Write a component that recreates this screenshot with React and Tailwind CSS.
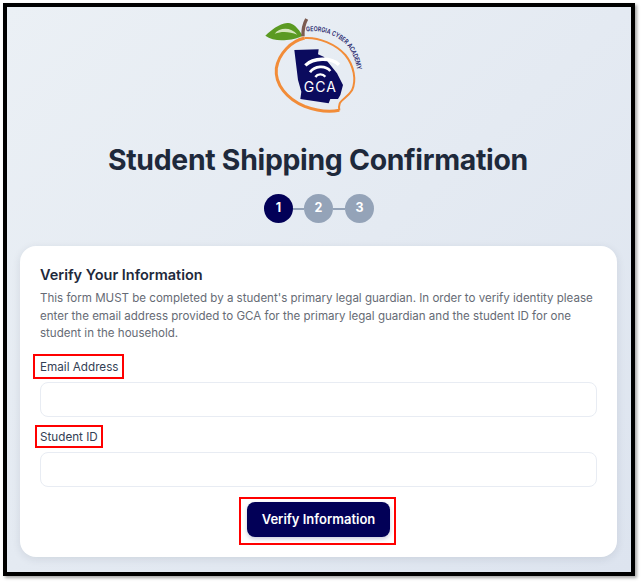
import React from 'react';

// coordinates follow the reference crop at 3x, so the viewBox is 3 times the drawn size
const Logo = () => (
  <svg width="110" height="100" viewBox="0 0 330 300" className="block -ml-[4px]">
    <path d="M122 62 C108 38 92 22 76 24 C50 26 28 46 10 62 C26 74 50 78 74 75 C94 73 110 68 122 62 Z" fill="#5b9a22" />
    <path d="M38 56 C52 38 86 34 106 59 C84 50 60 48 38 56 Z" fill="#d5e6bd" />
    <path d="M123 64 C122 44 125 28 134 12" stroke="#7b5b50" strokeWidth="10" fill="none" />
    <path d="M128 69 C88 78 50 115 43 160 C38 208 75 252 128 274 C165 288 205 291 232 286" stroke="#f28c38" strokeWidth="9" fill="none" />
    <path d="M128 69 C170 66 222 88 250 120 C276 152 284 196 270 226 C258 246 238 254 233 266 C230 274 231 280 232 286" stroke="#f28c38" strokeWidth="6" fill="none" />
    <path d="M97 105 L170 103 L168 118 L185 125 L205 150 L225 175 L243 210 L235 240 L228 252 L205 252 L200 265 L115 252 L118 230 L108 195 Z" fill="#0b0b5e" />
    <path d="M130 151 C154 128 206 126 231 149" stroke="#ffffff" strokeWidth="10" fill="none" />
    <path d="M144 172 C158 152 190 150 205 168" stroke="#ffffff" strokeWidth="8" fill="none" />
    <path d="M160 186 C167 176 182 175 190 185" stroke="#ffffff" strokeWidth="7" fill="none" />
    <text x="175" y="230" textAnchor="middle" fill="#ffffff" fontSize="42" letterSpacing="3" fontFamily="Inter, sans-serif">GCA</text>
    <path id="logo-arc" d="M133 50 C185 42 235 65 262 100 C280 130 290 170 291 212" fill="none" />
    <text fill="#1f1f6b" fontSize="20" fontWeight="600" fontFamily="Inter, sans-serif" textLength="214" lengthAdjust="spacingAndGlyphs">
      <textPath href="#logo-arc">GEORGIA CYBER ACADEMY</textPath>
    </text>
  </svg>
);

const Step = ({ n, active }) => (
  <div className={`w-[29px] h-[29px] rounded-full flex items-center justify-center text-white text-[12.5px] font-bold ${active ? 'bg-[#020057]' : 'bg-[#94a3b8]'}`}>
    {n}
  </div>
);

export default function App() {
  return (
    <div className="w-[644px] h-[585px] bg-white pl-[3px] pt-[3px] font-['Inter',sans-serif]">
      <div className="w-[632px] h-[573px] border-[4px] border-black bg-gradient-to-br from-[#ebf0f5] to-[#dde4ef] shadow-[2px_2px_3px_rgba(0,0,0,0.35)] px-[13px] flex flex-col items-center overflow-hidden">
        <div className="mt-[8px]">
          <Logo />
        </div>
        <h1 className="mt-[27px] -ml-[2px] text-[28.4px] leading-[36px] font-bold text-[#1e293b] tracking-[-0.3px] whitespace-nowrap">
          Student Shipping Confirmation
        </h1>
        <div className="mt-[16px] flex items-center">
          <Step n="1" active />
          <div className="w-[11px] h-[2px] bg-[#94a3b8]" />
          <Step n="2" />
          <div className="w-[12px] h-[2px] bg-[#94a3b8]" />
          <Step n="3" />
        </div>
        <div className="mt-[23px] self-start w-[597px] h-[311px] bg-white rounded-2xl shadow-[0_2px_8px_rgba(30,41,59,0.1)] px-5 pt-[19px] flex flex-col">
          <h2 className="text-[14.5px] leading-5 font-semibold text-[#1e293b]">Verify Your Information</h2>
          <p className="mt-[5px] text-[11.55px] leading-[17.5px] text-[#666b75]">
            This form MUST be completed by a student's primary legal guardian. In order to verify identity please enter the email address provided to GCA for the primary legal guardian and the student ID for one student in the household.
          </p>
          <div className="mt-[11px] self-start -ml-[7px] h-[25px] border-[2px] border-[#ff0000] pl-[5px] pr-[3px] pt-[4px] flex items-center text-[11.7px] text-[#334155]">
            Email Address
          </div>
          <div className="mt-[3px] h-[35px] rounded-lg border border-[#e8ecf3] bg-white" />
          <div className="mt-[8px] self-start -ml-[5px] h-[23px] border-[2px] border-[#ff0000] px-[3px] pt-[3px] flex items-center text-[11.7px] text-[#334155]">
            Student ID
          </div>
          <div className="mt-[4px] h-[35px] rounded-lg border border-[#e8ecf3] bg-white" />
          <div className="mt-[10px] self-center -ml-[2px] border-[2px] border-[#ff0000] pl-[6px] pr-[4px] pt-[3px] pb-[6px]">
            <div className="w-[143px] h-[35px] pt-px rounded-lg bg-[#020057] flex items-center justify-center text-white text-[13px] font-semibold shadow-[0_2px_4px_rgba(2,0,87,0.2)]">
              Verify Information
            </div>
          </div>
        </div>
      </div>
    </div>
  );
}
